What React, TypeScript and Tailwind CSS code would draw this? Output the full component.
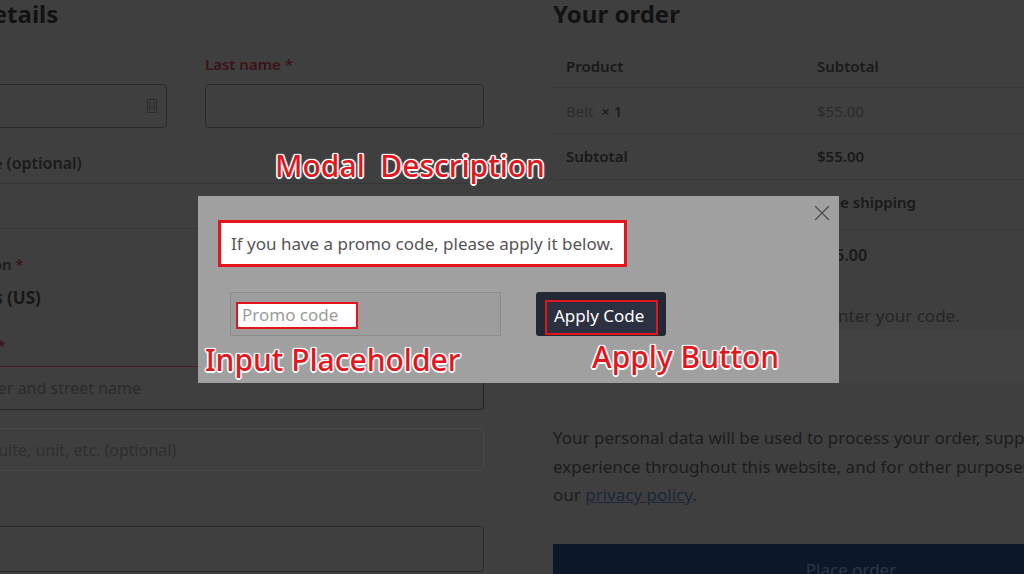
import { X } from 'lucide-react';

const outline =
  '[text-shadow:1.5px_0_#fff,-1.5px_0_#fff,0_1.5px_#fff,0_-1.5px_#fff,1px_1px_#fff,-1px_-1px_#fff,1px_-1px_#fff,-1px_1px_#fff,0_0_3px_#fff]';

const Label = ({ text, red = false }: { text: string; red?: boolean }) => (
  <p className={`text-[15px] font-semibold leading-[22px] ${red ? 'text-[#3c1216]' : 'text-[#1b1b1b]'}`}>
    {text} <span className="text-[#3c1216]">*</span>
  </p>
);

const OrderRow = ({
  left,
  right,
  bold = false,
  className = 'h-[46px] items-center',
}: {
  left: React.ReactNode;
  right: React.ReactNode;
  bold?: boolean;
  className?: string;
}) => (
  <div className={`flex border-b border-[#383838] ${className}`}>
    <div className={`w-[264px] pl-[13px] ${bold ? 'font-semibold text-[#191919]' : 'text-[#2b2b2b]'}`}>{left}</div>
    <div className={bold ? 'font-semibold text-[#191919]' : 'text-[#2b2b2b]'}>{right}</div>
  </div>
);

const App = () => {
  return (
    <div className="relative h-[574px] w-[1024px] overflow-hidden bg-[#3f3f3f] font-['Noto_Sans',sans-serif] text-[16px]">
      <div className="ml-[-112px] flex gap-[69px]">
        {/* billing form */}
        <div className="w-[596px] shrink-0">
          <h2 className="mt-[-2px] pl-[8px] text-[24px] font-bold leading-[32px] text-[#121212]">Billing details</h2>
          <div className="mt-[23px] flex gap-[38px]">
            <div className="w-[279px]">
              <Label text="First name" red />
              <div className="relative mt-[9px] h-[44px] rounded-sm border border-[#2a2a2a]">
                <svg className="absolute right-[9px] top-[14px]" width="10" height="14" viewBox="0 0 10 14">
                  <rect x="0.5" y="0.5" width="9" height="13" fill="none" stroke="#2b2b2b" />
                  <path d="M3 3v8M7 3v8" stroke="#2b2b2b" />
                </svg>
              </div>
            </div>
            <div className="w-[279px]">
              <Label text="Last name" red />
              <div className="mt-[9px] h-[44px] rounded-sm border border-[#2a2a2a]" />
            </div>
          </div>

          <p className="mt-[24px] text-[15px] font-semibold leading-[22px] text-[#1b1b1b]">
            Company name <span className="text-[16px]">(optional)</span>
          </p>
          <div className="mt-[9px] h-[46px] border-y border-[#363636]" />

          <div className="mt-[24px]">
            <Label text="Country / Region" />
          </div>
          <p className="mt-[11px] text-[17px] font-bold leading-[24px] text-[#171717]">United States (US)</p>

          <div className="mt-[24px]">
            <Label text="Street address" />
          </div>
          <div className="mt-[10px] flex h-[44px] items-center rounded-sm border border-[#2b2222] border-t-[#4a2024] pl-[12px] text-[#2a2a2a]">
            House number and street name
          </div>
          <div className="mt-[18px] flex h-[43px] items-center rounded-sm border border-[#474747] pl-[12px] text-[#2e2e2e]">
            Apartment, suite, unit, etc. (optional)
          </div>

          <div className="mt-[18px]">
            <Label text="Town / City" />
          </div>
          <div className="mt-[15px] h-[46px] rounded-sm border border-[#2a2a2a]" />
        </div>

        {/* order summary */}
        <div className="w-[596px] shrink-0">
          <h2 className="mt-[-2px] text-[24px] font-bold leading-[32px] text-[#121212]">Your order</h2>
          <div className="mt-[12px] text-[15px]">
            <OrderRow left="Product" right="Subtotal" bold className="h-[46px] items-center pt-[4px]" />
            <OrderRow
              left={
                <span>
                  Belt&nbsp; <b className="font-semibold text-[#1c1c1c]">× 1</b>
                </span>
              }
              right="$55.00"
              className="h-[46px] items-center pt-[2px]"
            />
            <OrderRow left="Subtotal" right="$55.00" bold />
            <OrderRow left="Shipping" right="Free shipping" bold className="h-[50px] items-start pt-[11px]" />
            <div className="flex h-[50px] items-center font-semibold text-[#191919]">
              <div className="w-[264px] pl-[13px]">Total</div>
              <div className="text-[16px]">$55.00</div>
            </div>
          </div>

          <p className="mt-[24px] pl-[42px] text-[17px] leading-[24px] text-[#252525]">
            Have a coupon? Click here to enter your code.
          </p>
          <div className="mt-[2px] h-[53px] bg-[#424242]" />

          <p className="mt-[41px] text-[17px] leading-[28.5px] text-[#1c1c1c]">
            Your personal data will be used to process your order, support your experience throughout this website, and
            for other purposes described in our <span className="text-[#1c263a] underline">privacy policy</span>.
          </p>
          <button className="mt-[34px] h-[56px] w-full bg-[#0b1828] pb-[4px] text-[17px] text-[#2a3648]">Place order</button>
        </div>
      </div>

      {/* promo code modal */}
      <div className="absolute left-[198px] top-[196px] h-[187px] w-[641px] bg-[#a0a0a0] pl-[20px] pt-[24px]">
        <button className="absolute right-[4px] top-[4px] text-[#4d4d4d]">
          <X size={26} strokeWidth={1.2} />
        </button>
        <div className="flex h-[47px] w-[409px] items-center border-[3px] border-[#e3141c] bg-white pl-[10px] text-[17px] text-[#555]">
          If you have a promo code, please apply it below.
        </div>
        <div className="mt-[25px] flex gap-[35px] pl-[12px]">
          <div className="h-[44px] w-[271px] border border-[#8c8c8c] bg-[#9d9d9d] pl-[5px] pt-[9px]">
            <div className="flex h-[27px] w-[122px] items-center border-2 border-[#e3141c] bg-white pb-[2px] pl-[4px] text-[17px] text-[#9c9c9c]">
              Promo code
            </div>
          </div>
          <button className="h-[44px] w-[130px] rounded-[3px] bg-[#222834] pl-[9px] pt-[6px] text-left">
            <span className="flex h-[35px] w-[113px] items-center border-2 border-[#e3141c] bg-[#2b3140] pb-[3px] pl-[7px] text-[17px] text-white">
              Apply Code
            </span>
          </button>
        </div>
      </div>

      {/* annotation labels */}
      <p className={`absolute left-[275px] top-[151px] text-[30px] font-medium leading-[30px] text-[#e4161d] ${outline}`}>
        Modal&nbsp; Description
      </p>
      <p className={`absolute left-[205px] top-[345px] text-[30px] font-medium leading-[30px] text-[#e4161d] ${outline}`}>
        Input Placeholder
      </p>
      <p className={`absolute left-[592px] top-[342px] text-[30px] font-medium leading-[30px] text-[#e4161d] ${outline}`}>
        Apply Button
      </p>
    </div>
  );
};

export default App;
